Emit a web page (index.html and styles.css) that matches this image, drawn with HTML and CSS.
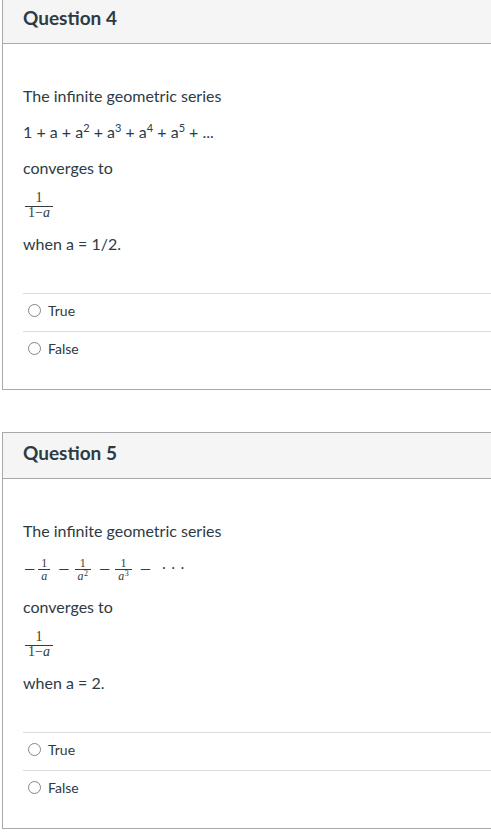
FILE: index.html
```html
<!DOCTYPE html>
<html lang="en">
<head>
<meta charset="utf-8">
<title>Quiz</title>
<link rel="stylesheet" href="styles.css">
</head>
<body>
<div class="page">
  <section class="card">
    <header class="card-header"><h2 class="card-title">Question 4</h2></header>
    <div class="card-body">
      <div class="text">
        <p class="line">The infinite geometric series</p>
        <p class="line">1 + a + a<sup>2</sup> + a<sup>3</sup> + a<sup>4</sup> + a<sup>5</sup> + ...</p>
        <p class="line">converges to</p>
        <div class="math-block">
          <span class="frac big">
            <span class="num">1</span>
            <span class="den">1−<i>a</i></span>
          </span>
        </div>
        <p class="line last">when a = 1/2.</p>
      </div>
      <div class="answers">
        <label class="answer"><span class="radio"></span><span class="answer-text">True</span></label>
        <label class="answer"><span class="radio"></span><span class="answer-text">False</span></label>
      </div>
    </div>
  </section>

  <section class="card">
    <header class="card-header"><h2 class="card-title">Question 5</h2></header>
    <div class="card-body">
      <div class="text">
        <p class="line">The infinite geometric series</p>
        <div class="series">
          <span class="op first">−</span>
          <span class="frac small"><span class="num">1</span><span class="den"><i>a</i></span></span>
          <span class="op">−</span>
          <span class="frac small"><span class="num">1</span><span class="den"><i>a</i><span class="exp">2</span></span></span>
          <span class="op">−</span>
          <span class="frac small"><span class="num">1</span><span class="den"><i>a</i><span class="exp">3</span></span></span>
          <span class="op">−</span>
          <span class="dots">···</span>
        </div>
        <p class="line">converges to</p>
        <div class="math-block">
          <span class="frac big">
            <span class="num">1</span>
            <span class="den">1−<i>a</i></span>
          </span>
        </div>
        <p class="line last">when a = 2.</p>
      </div>
      <div class="answers">
        <label class="answer"><span class="radio"></span><span class="answer-text">True</span></label>
        <label class="answer"><span class="radio"></span><span class="answer-text">False</span></label>
      </div>
    </div>
  </section>
</div>
</body>
</html>
```

FILE: styles.css
```css
html, body {
  margin: 0;
  padding: 0;
  overflow: hidden;
  background: #ffffff;
}

body {
  font-family: Lato, "Noto Sans", sans-serif;
  color: #2d3b45;
}

.page {
  margin-top: -3px;
  padding-left: 2px;
  display: flex;
  flex-direction: column;
  gap: 42px;
}

.card {
  border: 1px solid #a9a9a9;
  margin-right: -40px;
  background: #ffffff;
}

.card-header {
  height: 46px;
  box-sizing: border-box;
  padding: 0 0 6px 20px;
  background: #f5f5f5;
  border-bottom: 1px solid #a9a9a9;
  display: flex;
  align-items: center;
}

.card-title {
  margin: 0;
  font-size: 19px;
  font-weight: 700;
  line-height: 24px;
  color: #2d3b45;
}

.card-body {
  padding: 41px 0 20px 20px;
}

.text {
  font-size: 16px;
}

.line {
  margin: 0 0 14px 0;
  line-height: 22px;
}

.line.last {
  margin-bottom: 0;
}

.line sup {
  font-size: 11px;
  line-height: 0;
  vertical-align: 6px;
}

.math-block {
  margin: -1px 0 14px 0;
  height: 27px;
  display: flex;
  align-items: flex-start;
}

.frac {
  display: inline-flex;
  flex-direction: column;
  align-items: center;
  font-family: "Liberation Serif", "DejaVu Serif", serif;
  color: #333b40;
}

.frac i {
  font-style: italic;
}

.frac.big {
  margin-left: 2px;
  font-size: 14px;
}

.frac.big .num {
  line-height: 12px;
  padding-bottom: 2px;
}

.frac.big .den {
  line-height: 12px;
  border-top: 1px solid #333b40;
  padding: 0 3px;
}

.series {
  height: 26px;
  margin: 0 0 14px 0;
  display: flex;
  align-items: center;
}

.op {
  font-family: "Liberation Serif", serif;
  font-size: 20px;
  line-height: 14px;
  color: #333b40;
  margin: 0 5px 0 8px;
}

.op.first {
  margin-left: 1px;
  margin-right: 3px;
}

.frac.small {
  font-size: 12px;
}

.frac.small .num {
  line-height: 12px;
}

.frac.small .den {
  line-height: 12px;
  border-top: 1px solid #333b40;
  padding: 0 3px;
}

.exp {
  font-size: 8px;
  vertical-align: 4px;
  line-height: 0;
  margin-left: 0.5px;
}

.dots {
  font-family: "Liberation Serif", serif;
  font-size: 16px;
  line-height: 14px;
  letter-spacing: 4px;
  color: #333b40;
  margin-left: 5px;
}

.answers {
  margin-top: 38px;
}

.answer {
  display: flex;
  align-items: center;
  border-top: 1px solid #dcdcdc;
  padding: 6px 0 10px 5px;
  line-height: 21px;
  font-size: 14px;
}

.radio {
  width: 11px;
  height: 11px;
  border: 1px solid #858585;
  border-radius: 50%;
  background: #ffffff;
  margin-right: 7px;
  flex: none;
}

.answer-text {
  color: #2d3b45;
}
```
